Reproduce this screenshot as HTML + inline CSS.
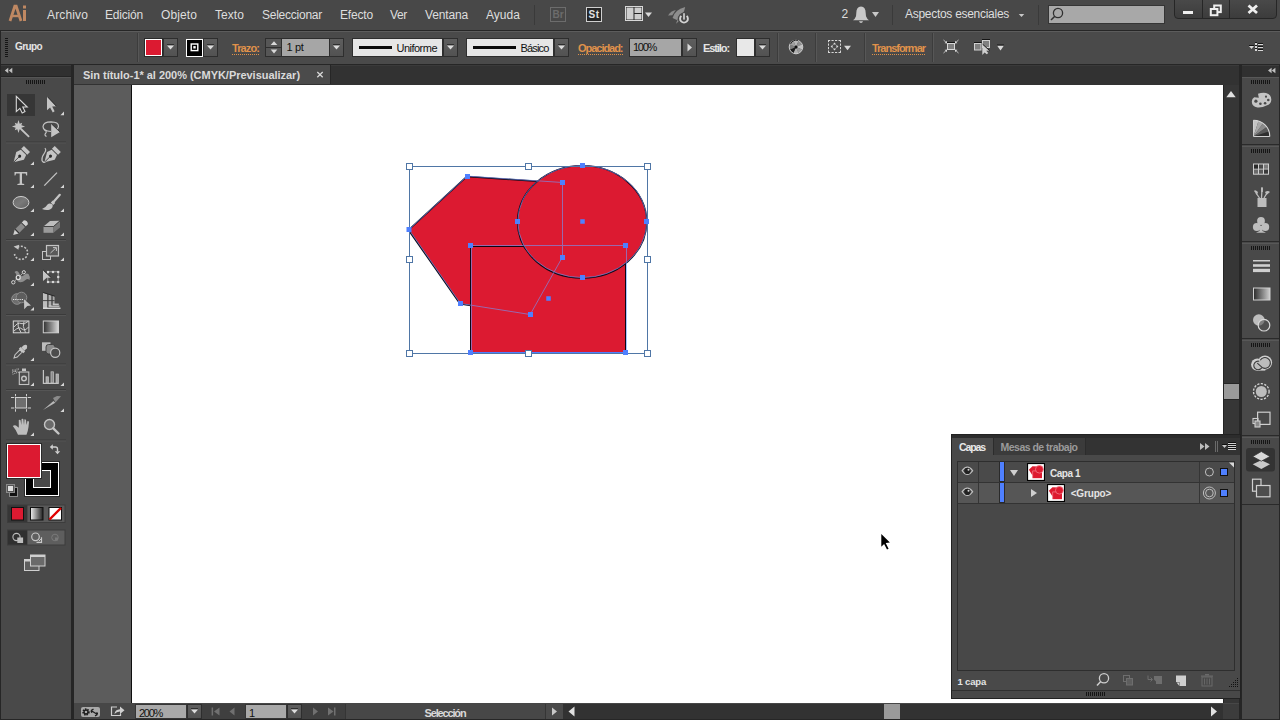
<!DOCTYPE html>
<html><head><meta charset="utf-8"><title>Illustrator</title>
<style>
html,body{margin:0;padding:0;}
body{width:1280px;height:720px;overflow:hidden;position:relative;background:#262626;font-family:"Liberation Sans",sans-serif;}
body>div,body>svg{position:absolute;}
.t{white-space:pre;}
</style></head><body>
<div style="left:0px;top:0px;width:1280px;height:30px;background:#484848;"></div>
<svg style="left:7px;top:3px;" width="22" height="21" viewBox="0 0 22 21"><g fill="none" stroke="#bf8862" stroke-width="2.8" stroke-linejoin="miter"><path d="M3 18 L7.8 3.2 L9.2 3.2 L14 18"/><path d="M5 13 L12 13" stroke-width="2.4"/></g><rect x="16" y="2.5" width="3" height="3" fill="#bf8862"/><rect x="16" y="7" width="3" height="11" fill="#bf8862"/></svg>
<div class="t" style="left:47px;top:9.34px;font-size:12px;line-height:12px;color:#dedede;font-weight:normal;letter-spacing:0.141px;">Archivo</div>
<div class="t" style="left:105px;top:9.34px;font-size:12px;line-height:12px;color:#dedede;font-weight:normal;letter-spacing:-0.194px;">Edición</div>
<div class="t" style="left:161px;top:9.34px;font-size:12px;line-height:12px;color:#dedede;font-weight:normal;letter-spacing:0.107px;">Objeto</div>
<div class="t" style="left:215px;top:9.34px;font-size:12px;line-height:12px;color:#dedede;font-weight:normal;letter-spacing:0.062px;">Texto</div>
<div class="t" style="left:262px;top:9.34px;font-size:12px;line-height:12px;color:#dedede;font-weight:normal;letter-spacing:-0.246px;">Seleccionar</div>
<div class="t" style="left:340px;top:9.34px;font-size:12px;line-height:12px;color:#dedede;font-weight:normal;letter-spacing:-0.172px;">Efecto</div>
<div class="t" style="left:390px;top:9.34px;font-size:12px;line-height:12px;color:#dedede;font-weight:normal;letter-spacing:-0.339px;">Ver</div>
<div class="t" style="left:425px;top:9.34px;font-size:12px;line-height:12px;color:#dedede;font-weight:normal;letter-spacing:-0.150px;">Ventana</div>
<div class="t" style="left:486px;top:9.34px;font-size:12px;line-height:12px;color:#dedede;font-weight:normal;letter-spacing:0.037px;">Ayuda</div>
<div style="left:534px;top:5px;width:1px;height:20px;background:#3a3a3a;"></div>
<div style="left:550px;top:7px;width:16px;height:15px;border:1px solid #6c6c6c;box-sizing:border-box;"></div>
<div class="t" style="left:552.5px;top:10.04px;font-size:10px;line-height:10px;color:#6c6c6c;font-weight:bold;letter-spacing:-0.062px;">Br</div>
<div style="left:586px;top:7px;width:16px;height:15px;border:1px solid #d0d0d0;background:#262626;box-sizing:border-box;"></div>
<div class="t" style="left:588.5px;top:10.04px;font-size:10px;line-height:10px;color:#e0e0e0;font-weight:bold;letter-spacing:0.500px;">St</div>
<svg style="left:624px;top:5px;" width="30" height="17" viewBox="0 0 30 17"><rect x="1.5" y="1.5" width="17" height="14" fill="#262626" stroke="#d8d8d8" stroke-width="1"/><rect x="2.5" y="2.5" width="7" height="12" fill="#cfcfcf"/><rect x="10.5" y="2.5" width="7" height="5.5" fill="#cfcfcf"/><rect x="10.5" y="9" width="7" height="5.5" fill="#cfcfcf"/><path d="M21.0 7.5 L28.0 7.5 L24.5 12.0 Z" fill="#d8d8d8"/></svg>
<svg style="left:666px;top:4px;" width="26" height="22" viewBox="0 0 26 22"><path d="M6.6 14 Q8.5 5.8 19.2 3 Q17.8 11.5 10.8 16 Z" fill="#8e8e8e"/><path d="M2 11.6 Q4.8 6.8 9.8 6 L6.3 11.3 Z" fill="#8a8a8a"/><path d="M10 19.8 L11.6 15.6 L13.4 16.8 Z" fill="#8a8a8a"/><circle cx="18" cy="14.8" r="6.2" fill="#484848"/><path d="M15.3 11.9 A3.9 3.9 0 1 0 20.7 11.9" fill="none" stroke="#d4d4d4" stroke-width="1.9"/><rect x="16.6" y="8.6" width="2.8" height="7.6" fill="#484848"/><rect x="17.2" y="9.2" width="1.6" height="6.4" fill="#d4d4d4"/></svg>
<div class="t" style="left:841.5px;top:8.14px;font-size:12px;line-height:12px;color:#dedede;font-weight:normal;letter-spacing:-0.188px;">2</div>
<svg style="left:852px;top:5px;" width="30" height="19" viewBox="0 0 30 19"><path d="M9 1.5 Q4.3 1.8 4.3 8 L4 11.2 Q3 13.8 1 15.3 L17 15.3 Q15 13.8 14 11.2 L13.7 8 Q13.7 1.8 9 1.5 Z" fill="#c8c8c8"/><path d="M7 16.3 L11 16.3 Q10.5 18 9 18 Q7.5 18 7 16.3 Z" fill="#c8c8c8"/><path d="M20.0 7 L27.0 7 L23.5 12 Z" fill="#c8c8c8"/></svg>
<div style="left:892px;top:5px;width:1px;height:20px;background:#3a3a3a;"></div>
<div class="t" style="left:905px;top:8.14px;font-size:12px;line-height:12px;color:#dedede;font-weight:normal;letter-spacing:-0.285px;">Aspectos esenciales</div>
<svg style="left:1017px;top:13px;" width="9" height="5" viewBox="0 0 9 5"><path d="M1.75 1 L7.25 1 L4.5 4 Z" fill="#c8c8c8"/></svg>
<div style="left:1038px;top:5px;width:1px;height:20px;background:#3a3a3a;"></div>
<div style="left:1048px;top:5px;width:117px;height:19px;background:#a8a8a8;border:1px solid #353535;box-sizing:border-box;"></div>
<svg style="left:1049px;top:6px;" width="16" height="17" viewBox="0 0 16 17"><circle cx="9" cy="7" r="4.6" fill="none" stroke="#303030" stroke-width="1.3"/><path d="M5.8 10.2 L2 14" stroke="#303030" stroke-width="1.5"/></svg>
<div style="left:1174px;top:-2px;width:103px;height:21px;background:linear-gradient(#4a4a4a,#3c3c3c);border:1px solid #262626;border-radius:0 0 4px 4px;box-sizing:border-box;"></div>
<div style="left:1202px;top:0px;width:1px;height:18px;background:#262626;"></div>
<div style="left:1229px;top:0px;width:1px;height:18px;background:#262626;"></div>
<div style="left:1183px;top:11px;width:10px;height:3px;background:#eeeeee;"></div>
<svg style="left:1208px;top:3px;" width="16" height="14" viewBox="0 0 16 14"><rect x="6.2" y="2.5" width="6.6" height="6.6" fill="none" stroke="#eeeeee" stroke-width="2"/><rect x="2.8" y="6" width="6.6" height="6.2" fill="#404040" stroke="#eeeeee" stroke-width="2"/></svg>
<svg style="left:1246px;top:3px;" width="14" height="12" viewBox="0 0 14 12"><path d="M2.5 2.5 L11 10 M11 2.5 L2.5 10" stroke="#eeeeee" stroke-width="2.8"/></svg>
<div style="left:0px;top:31px;width:1280px;height:33px;background:#4a4a4a;"></div>
<div style="left:1px;top:31px;width:1279px;height:1px;background:#5c5c5c;"></div>
<div style="left:0px;top:31px;width:1px;height:33px;background:#262626;"></div>
<svg style="left:5px;top:38px;" width="3" height="20" viewBox="0 0 3 20"><rect x="0" y="0" width="3" height="1" fill="#151515"/><rect x="0" y="2" width="3" height="1" fill="#151515"/><rect x="0" y="4" width="3" height="1" fill="#151515"/><rect x="0" y="6" width="3" height="1" fill="#151515"/><rect x="0" y="8" width="3" height="1" fill="#151515"/><rect x="0" y="10" width="3" height="1" fill="#151515"/><rect x="0" y="12" width="3" height="1" fill="#151515"/><rect x="0" y="14" width="3" height="1" fill="#151515"/><rect x="0" y="16" width="3" height="1" fill="#151515"/><rect x="0" y="18" width="3" height="1" fill="#151515"/></svg>
<div class="t" style="left:15px;top:41.73px;font-size:10px;line-height:10px;color:#e4e4e4;font-weight:bold;letter-spacing:-0.600px;">Grupo</div>
<div style="left:137px;top:33px;width:1px;height:29px;background:#3c3c3c;"></div>
<div style="left:138px;top:33px;width:1px;height:29px;background:#575757;"></div>
<div style="left:145px;top:39px;width:17px;height:17px;background:#dc1a31;border:1px solid #ffffff;outline:1px solid #2a2a2a;outline-offset:0;box-sizing:border-box;"></div>
<div style="left:163px;top:38px;width:15px;height:19px;background:linear-gradient(#5e5e5e,#525252);border:1px solid #2e2e2e;box-sizing:border-box;"></div>
<svg style="left:163px;top:38px;" width="15" height="19" viewBox="0 0 15 19"><rect x="4.0" y="6.0" width="7" height="1" fill="#2e2e2e"/><path d="M4.0 7.5 L11.0 7.5 L7.5 11.5 Z" fill="#dcdcdc"/></svg>
<div style="left:186px;top:38.5px;width:17px;height:18px;background:#000;border:1.5px solid #ffffff;box-sizing:border-box;"></div>
<svg style="left:186px;top:38px;" width="17" height="19" viewBox="0 0 17 19"><rect x="5.2" y="6" width="6.6" height="6.6" fill="none" stroke="#fff" stroke-width="1.4"/><rect x="7.3" y="8.1" width="2.4" height="2.4" fill="#fff"/></svg>
<div style="left:203px;top:38px;width:15px;height:19px;background:linear-gradient(#5e5e5e,#525252);border:1px solid #2e2e2e;box-sizing:border-box;"></div>
<svg style="left:203px;top:38px;" width="15" height="19" viewBox="0 0 15 19"><rect x="4.0" y="6.0" width="7" height="1" fill="#2e2e2e"/><path d="M4.0 7.5 L11.0 7.5 L7.5 11.5 Z" fill="#dcdcdc"/></svg>
<div class="t" style="left:232px;top:42.79px;font-size:11px;line-height:11px;color:#e0924a;font-weight:bold;letter-spacing:-0.901px;">Trazo:</div>
<div style="left:232px;top:54px;width:27px;height:1px;background:repeating-linear-gradient(90deg,#e0924a 0 1px,transparent 1px 2px);"></div>
<div style="left:265px;top:38px;width:17px;height:19px;background:#565656;border:1px solid #2e2e2e;box-sizing:border-box;"></div>
<div style="left:266px;top:47px;width:15px;height:1px;background:#2e2e2e;"></div>
<svg style="left:265px;top:38px;" width="17" height="19" viewBox="0 0 17 19"><path d="M5.7 7 L12.3 7 L9 3.2 Z" fill="#d8d8d8"/><path d="M5.7 11.5 L12.3 11.5 L9 15.5 Z" fill="#d8d8d8"/></svg>
<div style="left:282px;top:38px;width:47px;height:19px;background:#a6a6a6;border-top:1px solid #2e2e2e;border-bottom:1px solid #2e2e2e;box-sizing:border-box;"></div>
<div class="t" style="left:286.5px;top:41.89px;font-size:11px;line-height:11px;color:#111111;font-weight:normal;letter-spacing:-0.340px;">1 pt</div>
<div style="left:329px;top:38px;width:15px;height:19px;background:linear-gradient(#5e5e5e,#525252);border:1px solid #2e2e2e;box-sizing:border-box;"></div>
<svg style="left:329px;top:38px;" width="15" height="19" viewBox="0 0 15 19"><rect x="4.0" y="6.0" width="7" height="1" fill="#2e2e2e"/><path d="M4.0 7.5 L11.0 7.5 L7.5 11.5 Z" fill="#dcdcdc"/></svg>
<div style="left:352px;top:38px;width:91px;height:19px;background:#e6e6e6;border:1px solid #2e2e2e;box-sizing:border-box;"></div>
<div style="left:359px;top:46px;width:33px;height:3px;background:#0a0a0a;"></div>
<div class="t" style="left:396.5px;top:42.79px;font-size:11px;line-height:11px;color:#111111;font-weight:normal;letter-spacing:-0.516px;">Uniforme</div>
<div style="left:443px;top:38px;width:15px;height:19px;background:linear-gradient(#5e5e5e,#525252);border:1px solid #2e2e2e;box-sizing:border-box;"></div>
<svg style="left:443px;top:38px;" width="15" height="19" viewBox="0 0 15 19"><rect x="4.0" y="6.0" width="7" height="1" fill="#2e2e2e"/><path d="M4.0 7.5 L11.0 7.5 L7.5 11.5 Z" fill="#dcdcdc"/></svg>
<div style="left:466px;top:38px;width:88px;height:19px;background:#e6e6e6;border:1px solid #2e2e2e;box-sizing:border-box;"></div>
<div style="left:473px;top:46px;width:43px;height:3px;background:#0a0a0a;"></div>
<div class="t" style="left:520.5px;top:42.79px;font-size:11px;line-height:11px;color:#111111;font-weight:normal;letter-spacing:-0.839px;">Básico</div>
<div style="left:554px;top:38px;width:15px;height:19px;background:linear-gradient(#5e5e5e,#525252);border:1px solid #2e2e2e;box-sizing:border-box;"></div>
<svg style="left:554px;top:38px;" width="15" height="19" viewBox="0 0 15 19"><rect x="4.0" y="6.0" width="7" height="1" fill="#2e2e2e"/><path d="M4.0 7.5 L11.0 7.5 L7.5 11.5 Z" fill="#dcdcdc"/></svg>
<div class="t" style="left:578px;top:42.79px;font-size:11px;line-height:11px;color:#e0924a;font-weight:bold;letter-spacing:-1.033px;">Opacidad:</div>
<div style="left:578px;top:54px;width:45px;height:1px;background:repeating-linear-gradient(90deg,#e0924a 0 1px,transparent 1px 2px);"></div>
<div style="left:629px;top:38px;width:53px;height:19px;background:#a6a6a6;border:1px solid #2e2e2e;box-sizing:border-box;"></div>
<div class="t" style="left:633px;top:41.89px;font-size:11px;line-height:11px;color:#111111;font-weight:normal;letter-spacing:-1.285px;">100%</div>
<div style="left:682px;top:38px;width:15px;height:19px;background:linear-gradient(#5e5e5e,#525252);border:1px solid #2e2e2e;box-sizing:border-box;"></div>
<svg style="left:682px;top:38px;" width="15" height="19" viewBox="0 0 15 19"><path d="M5.5 5.5 L10 9.5 L5.5 13.5 Z" fill="#d8d8d8"/></svg>
<div class="t" style="left:703px;top:42.79px;font-size:11px;line-height:11px;color:#e4e4e4;font-weight:bold;letter-spacing:-1.089px;">Estilo:</div>
<div style="left:736px;top:38px;width:19px;height:19px;background:#e8e8e8;border:1px solid #2e2e2e;box-sizing:border-box;"></div>
<div style="left:755px;top:38px;width:15px;height:19px;background:linear-gradient(#5e5e5e,#525252);border:1px solid #2e2e2e;box-sizing:border-box;"></div>
<svg style="left:755px;top:38px;" width="15" height="19" viewBox="0 0 15 19"><rect x="4.0" y="6.0" width="7" height="1" fill="#2e2e2e"/><path d="M4.0 7.5 L11.0 7.5 L7.5 11.5 Z" fill="#dcdcdc"/></svg>
<div style="left:777px;top:33px;width:1px;height:29px;background:#3c3c3c;"></div>
<div style="left:778px;top:33px;width:1px;height:29px;background:#575757;"></div>
<svg style="left:788px;top:39px;" width="16" height="16" viewBox="0 0 16 16"><path d="M8 8 L5.47 1.90 A6.6 6.6 0 0 1 10.53 1.90 Z" fill="#b8b8b8"/><path d="M8 8 L10.53 1.90 A6.6 6.6 0 0 1 14.10 5.47 Z" fill="#8e8e8e"/><path d="M8 8 L14.10 5.47 A6.6 6.6 0 0 1 14.10 10.53 Z" fill="#c4c4c4"/><path d="M8 8 L14.10 10.53 A6.6 6.6 0 0 1 10.53 14.10 Z" fill="#9a9a9a"/><path d="M8 8 L10.53 14.10 A6.6 6.6 0 0 1 5.47 14.10 Z" fill="#b0b0b0"/><path d="M8 8 L5.47 14.10 A6.6 6.6 0 0 1 1.90 10.53 Z" fill="#1e1e1e"/><path d="M8 8 L1.90 10.53 A6.6 6.6 0 0 1 1.90 5.47 Z" fill="#7e7e7e"/><path d="M8 8 L1.90 5.47 A6.6 6.6 0 0 1 5.47 1.90 Z" fill="#a0a0a0"/><circle cx="8" cy="8" r="6.8" fill="none" stroke="#d8d8d8" stroke-width="0.9"/><path d="M2.5 5 A6.8 6.8 0 0 1 10 1.4" fill="none" stroke="#2a2a2a" stroke-width="1"/><circle cx="8" cy="8" r="1.5" fill="#111"/></svg>
<div style="left:815px;top:33px;width:1px;height:29px;background:#3c3c3c;"></div>
<div style="left:816px;top:33px;width:1px;height:29px;background:#575757;"></div>
<svg style="left:826px;top:38px;" width="28" height="17" viewBox="0 0 28 17"><rect x="2.0" y="2" width="2.2" height="1" fill="#d8d8d8"/><rect x="2.0" y="14" width="2.2" height="1" fill="#d8d8d8"/><rect x="2" y="2.0" width="1" height="2.2" fill="#d8d8d8"/><rect x="14" y="2.0" width="1" height="2.2" fill="#d8d8d8"/><rect x="5.5" y="2" width="2.2" height="1" fill="#d8d8d8"/><rect x="5.5" y="14" width="2.2" height="1" fill="#d8d8d8"/><rect x="2" y="5.5" width="1" height="2.2" fill="#d8d8d8"/><rect x="14" y="5.5" width="1" height="2.2" fill="#d8d8d8"/><rect x="9.0" y="2" width="2.2" height="1" fill="#d8d8d8"/><rect x="9.0" y="14" width="2.2" height="1" fill="#d8d8d8"/><rect x="2" y="9.0" width="1" height="2.2" fill="#d8d8d8"/><rect x="14" y="9.0" width="1" height="2.2" fill="#d8d8d8"/><rect x="12.5" y="2" width="2.2" height="1" fill="#d8d8d8"/><rect x="12.5" y="14" width="2.2" height="1" fill="#d8d8d8"/><rect x="2" y="12.5" width="1" height="2.2" fill="#d8d8d8"/><rect x="14" y="12.5" width="1" height="2.2" fill="#d8d8d8"/><path d="M8.5 4.6 L10.2 6.6 L6.8 6.6 Z M8.5 12.4 L10.2 10.4 L6.8 10.4 Z M4.6 8.5 L6.6 6.8 L6.6 10.2 Z M12.4 8.5 L10.4 6.8 L10.4 10.2 Z" fill="#d8d8d8"/><path d="M18.0 7.8 L25.0 7.8 L21.5 12.2 Z" fill="#d8d8d8"/></svg>
<div style="left:864px;top:33px;width:1px;height:29px;background:#3c3c3c;"></div>
<div style="left:865px;top:33px;width:1px;height:29px;background:#575757;"></div>
<div class="t" style="left:872px;top:42.79px;font-size:11px;line-height:11px;color:#e0924a;font-weight:bold;letter-spacing:-1.018px;">Transformar</div>
<div style="left:872px;top:54px;width:53px;height:1px;background:repeating-linear-gradient(90deg,#e0924a 0 1px,transparent 1px 2px);"></div>
<div style="left:932px;top:33px;width:1px;height:29px;background:#3c3c3c;"></div>
<div style="left:933px;top:33px;width:1px;height:29px;background:#575757;"></div>
<svg style="left:942px;top:38px;" width="18" height="17" viewBox="0 0 18 17"><rect x="5.5" y="5.5" width="7" height="6" fill="#808080" stroke="#d8d8d8" stroke-width="1"/><rect x="5" y="4" width="8" height="1" fill="#151515"/><path d="M1.5 2 L5 5.2 M16.5 2 L13 5.2 M1.5 15 L5 11.8 M16.5 15 L13 11.8" stroke="#cfcfcf" stroke-width="0.9"/><path d="M5 5.2 L2.6 5.2 L5 2.8 Z M13 5.2 L15.4 5.2 L13 2.8 Z M5 11.8 L2.6 11.8 L5 14.2 Z M13 11.8 L15.4 11.8 L13 14.2 Z" fill="#d8d8d8"/></svg>
<svg style="left:972px;top:38px;" width="36" height="18" viewBox="0 0 36 18"><rect x="2.5" y="5.5" width="6.5" height="6.5" fill="#808080" stroke="#d0d0d0" stroke-width="1"/><rect x="2" y="4" width="7.5" height="1" fill="#151515"/><rect x="10.5" y="2.5" width="7" height="7" fill="#808080" stroke="#d0d0d0" stroke-width="1"/><rect x="10" y="1" width="8" height="1" fill="#151515"/><path d="M10.3 6 L10.3 17 L12.6 14.4 L14.8 16.2 L16.2 15 L14.2 12.8 L17.6 12.6 Z" fill="#cfcfcf"/><path d="M10.6 6.2 L17.6 12.6" stroke="#151515" stroke-width="1"/><path d="M25.0 7.5 L32.0 7.5 L28.5 12.5 Z" fill="#d8d8d8"/><rect x="25" y="6.5" width="7" height="1" fill="#151515"/></svg>
<svg style="left:1244px;top:38px;" width="24" height="18" viewBox="0 0 24 18"><rect x="5" y="7" width="5" height="1" fill="#151515"/><path d="M5 8 L10 8 L7.5 11 Z" fill="#d8d8d8"/><rect x="11" y="5" width="2" height="2" fill="#d8d8d8"/><rect x="11" y="4" width="2" height="1" fill="#1a1a1a"/><rect x="14" y="5" width="5" height="1" fill="#151515"/><rect x="14" y="6" width="5" height="1" fill="#d8d8d8"/><rect x="11" y="8" width="2" height="2" fill="#d8d8d8"/><rect x="11" y="7" width="2" height="1" fill="#1a1a1a"/><rect x="14" y="8" width="5" height="1" fill="#151515"/><rect x="14" y="9" width="5" height="1" fill="#d8d8d8"/><rect x="11" y="11" width="2" height="2" fill="#d8d8d8"/><rect x="11" y="10" width="2" height="1" fill="#1a1a1a"/><rect x="14" y="11" width="5" height="1" fill="#151515"/><rect x="14" y="12" width="5" height="1" fill="#d8d8d8"/></svg>
<div style="left:1px;top:65px;width:70px;height:12px;background:#303030;"></div>
<div style="left:1px;top:65px;width:70px;height:1px;background:#3c3c3c;"></div>
<div style="left:1px;top:76px;width:70px;height:1px;background:#242424;"></div>
<svg style="left:4px;top:67px;" width="10" height="8" viewBox="0 0 10 8"><path d="M4.3 0.8 L0.8 3.5 L4.3 6.2 Z M8.3 0.8 L4.8 3.5 L8.3 6.2 Z" fill="#c0c0c0"/></svg>
<div style="left:1px;top:77px;width:70px;height:642px;background:#494949;"></div>
<div style="left:1px;top:77px;width:70px;height:1px;background:#555555;"></div>
<svg style="left:26px;top:80px;" width="21" height="5" viewBox="0 0 21 5"><rect x="0" y="0" width="1" height="4" fill="#151515"/><rect x="2" y="0" width="1" height="4" fill="#151515"/><rect x="4" y="0" width="1" height="4" fill="#151515"/><rect x="6" y="0" width="1" height="4" fill="#151515"/><rect x="8" y="0" width="1" height="4" fill="#151515"/><rect x="10" y="0" width="1" height="4" fill="#151515"/><rect x="12" y="0" width="1" height="4" fill="#151515"/><rect x="14" y="0" width="1" height="4" fill="#151515"/><rect x="16" y="0" width="1" height="4" fill="#151515"/><rect x="18" y="0" width="1" height="4" fill="#151515"/></svg>
<div style="left:74px;top:65px;width:1165px;height:20px;background:#323232;"></div>
<div style="left:74px;top:65px;width:1165px;height:1px;background:#3a3a3a;"></div>
<div style="left:74px;top:65px;width:256px;height:19px;background:#4b4b4b;"></div>
<div style="left:330px;top:65px;width:1px;height:19px;background:#262626;"></div>
<div class="t" style="left:83px;top:69.69px;font-size:11px;line-height:11px;color:#dadada;font-weight:bold;letter-spacing:-0.029px;">Sin título-1* al 200% (CMYK/Previsualizar)</div>
<svg style="left:315px;top:69px;" width="10" height="10" viewBox="0 0 10 10"><path d="M2.3 3 L7.7 8.2 M7.7 3 L2.3 8.2" stroke="#d8d8d8" stroke-width="1.3"/></svg>
<div style="left:74px;top:85px;width:58px;height:618px;background:#5c5c5c;"></div>
<div style="left:132px;top:85px;width:1091px;height:618px;background:#ffffff;"></div>
<div style="left:131px;top:85px;width:1px;height:618px;background:#0e0e0e;"></div>
<div style="left:1223px;top:85px;width:16px;height:619px;background:#3a3a3a;"></div>
<div style="left:1242px;top:65px;width:37px;height:12px;background:#303030;"></div>
<div style="left:1242px;top:65px;width:37px;height:1px;background:#3c3c3c;"></div>
<div style="left:1242px;top:77px;width:37px;height:642px;background:#494949;"></div>
<div style="left:951px;top:434px;width:290px;height:264px;background:#494949;border:1px solid #262626;box-sizing:border-box;"></div>
<svg style="left:0px;top:0px;" width="72" height="720" viewBox="0 0 72 720"><rect x="6" y="141.5" width="60" height="1" fill="#3b3b3b"/><rect x="6" y="142.5" width="60" height="1" fill="#555555"/><rect x="6" y="239.0" width="60" height="1" fill="#3b3b3b"/><rect x="6" y="240.0" width="60" height="1" fill="#555555"/><rect x="6" y="314.0" width="60" height="1" fill="#3b3b3b"/><rect x="6" y="315.0" width="60" height="1" fill="#555555"/><rect x="6" y="363.5" width="60" height="1" fill="#3b3b3b"/><rect x="6" y="364.5" width="60" height="1" fill="#555555"/><rect x="6" y="389.0" width="60" height="1" fill="#3b3b3b"/><rect x="6" y="390.0" width="60" height="1" fill="#555555"/><rect x="6" y="439.5" width="60" height="1" fill="#3b3b3b"/><rect x="6" y="440.5" width="60" height="1" fill="#555555"/><rect x="7" y="94" width="28" height="22" fill="#363636"/><path d="M16.3 96.3 L16.3 111.6 L19.9 108.3 L22.2 113 L25 111.6 L22.8 107 L27.2 107 Z" fill="#303030" stroke="#d8d8d8" stroke-width="1.1" stroke-linejoin="miter"/><path d="M47 96.6 L47 110.2 L50.1 107.6 L52.8 112.4 L54.6 111.3 L52.2 106.4 L56.2 106.2 Z" fill="#c4c4c4"/><path d="M47.5 96.8 L56.2 106" stroke="#262626" stroke-width="0.9"/><path d="M60.4 115.2 L64 115.2 L64 111.60000000000001 Z" fill="#d6d6d6"/><path d="M25.10 126.50 L21.36 127.69 L22.18 130.18 L19.69 129.36 L18.50 133.10 L17.31 129.36 L14.82 130.18 L15.64 127.69 L11.90 126.50 L15.64 125.31 L14.82 122.82 L17.31 123.64 L18.50 119.90 L19.69 123.64 L22.18 122.82 L21.36 125.31 Z" fill="#c4c4c4"/><path d="M21.5 129.5 L28.6 136.4" stroke="#c4c4c4" stroke-width="1.8" stroke-linecap="round"/><path d="M51 131.5 Q43 131 43 126.5 Q43.5 121.8 51 121.8 Q58.8 122 58.5 126.5 Q58.2 129 56 130" fill="none" stroke="#c4c4c4" stroke-width="1.2"/><path d="M44.5 130 Q47.5 131.5 45.5 133.5 Q44 135 46.5 136.5" fill="none" stroke="#c4c4c4" stroke-width="1.1"/><path d="M51.2 123.8 L60 132 L51.2 137.3 Z" fill="#c4c4c4"/><path d="M51.6 124 L60 132" stroke="#262626" stroke-width="0.8"/><g transform="translate(13.6,162.3) rotate(45) scale(1.08)"><path d="M0 0 L-5 -8.5 L-3.5 -13 L3.5 -13 L5 -8.5 Z" fill="#c4c4c4"/><path d="M0 0 L0 -7" stroke="#3a3a3a" stroke-width="0.8"/><circle cx="0" cy="-8" r="1.4" fill="#2a2a2a"/><rect x="-4" y="-17.5" width="8" height="3.6" fill="#c4c4c4"/></g><path d="M30.4 165 L34 165 L34 161.4 Z" fill="#d6d6d6"/><g transform="translate(44.4,162.3) rotate(45) scale(1.08)"><path d="M0 0 L-5 -8.5 L-3.5 -13 L3.5 -13 L5 -8.5 Z" fill="#c4c4c4"/><path d="M0 0 L0 -7" stroke="#3a3a3a" stroke-width="0.8"/><circle cx="0" cy="-8" r="1.4" fill="#2a2a2a"/><rect x="-4" y="-17.5" width="8" height="3.6" fill="#c4c4c4"/></g><path d="M44.8 148.3 Q46.8 149.5 44.5 153 Q41.5 157 42 160.5 Q43 163 45.5 162" fill="none" stroke="#c4c4c4" stroke-width="1.2"/><path d="M14.5 172 L27.2 172 L27.2 175.5 L26.3 175.5 L25.6 173.6 L22 173.6 L22 183.6 L24.2 184 L24.2 185 L17.4 185 L17.4 184 L19.7 183.6 L19.7 173.6 L16.1 173.6 L15.4 175.5 L14.5 175.5 Z" fill="#c4c4c4"/><path d="M30.4 188 L34 188 L34 184.4 Z" fill="#d6d6d6"/><path d="M44.3 185.6 L57 172.6" stroke="#c4c4c4" stroke-width="1.3"/><path d="M60.4 188 L64 188 L64 184.4 Z" fill="#d6d6d6"/><defs><linearGradient id="eg" x1="0" y1="0" x2="1" y2="1"><stop offset="0" stop-color="#6a6a6a"/><stop offset="0.5" stop-color="#7a7a7a"/><stop offset="1" stop-color="#5e5e5e"/></linearGradient><linearGradient id="gg" x1="0" y1="0" x2="1" y2="0"><stop offset="0" stop-color="#303030"/><stop offset="1" stop-color="#d8d8d8"/></linearGradient><linearGradient id="gg2" x1="0" y1="0" x2="1" y2="0"><stop offset="0" stop-color="#f0f0f0"/><stop offset="1" stop-color="#202020"/></linearGradient></defs><ellipse cx="21" cy="202.5" rx="7.9" ry="6" fill="url(#eg)" stroke="#d0d0d0" stroke-width="1"/><path d="M30.4 212 L34 212 L34 208.4 Z" fill="#d6d6d6"/><path d="M59.8 194.8 L53 202.5" stroke="#c4c4c4" stroke-width="2.2" stroke-linecap="round"/><path d="M52.8 200.6 L55.2 203 L53.2 205 L50.8 202.6 Z" fill="#c4c4c4"/><path d="M42 209 Q45.5 208 47.5 204.5 Q49.5 202.3 52.5 204.5 Q53.5 207.5 50 209.5 Q46 210.8 42 209 Z" fill="#c4c4c4"/><path d="M60.4 212 L64 212 L64 208.4 Z" fill="#d6d6d6"/><g transform="translate(13.2,235) rotate(45)"><path d="M0 0 L-2.8 -5 L2.8 -5 Z" fill="#d0d0d0"/><rect x="-2.8" y="-15" width="5.6" height="10" fill="#8a8a8a"/><rect x="-2.8" y="-15" width="5.6" height="1" fill="#2e2e2e"/><rect x="-2.8" y="-6" width="5.6" height="1" fill="#2e2e2e"/><path d="M-2.8 -15 L-2.8 -18 Q0 -20.5 2.8 -18 L2.8 -15 Z" fill="#d0d0d0"/></g><path d="M30.4 236 L34 236 L34 232.4 Z" fill="#d6d6d6"/><path d="M43.5 226.5 L50 221 L60 220.8 L53.5 226.5 Z" fill="#bdbdbd"/><path d="M43.5 226.5 L53.5 226.5 L53.5 232.8 L43.5 232.8 Z" fill="#9a9a9a"/><path d="M53.5 226.5 L60 220.8 L60 227.5 L53.5 232.8 Z" fill="#777"/><path d="M43.5 226.5 L53.5 226.5 L60 220.8" fill="none" stroke="#303030" stroke-width="0.8"/><path d="M60.4 236 L64 236 L64 232.4 Z" fill="#d6d6d6"/><path d="M17.5 247.2 A6.6 6.6 0 1 1 14.5 254" fill="none" stroke="#c4c4c4" stroke-width="1.6" stroke-dasharray="2 1.5"/><path d="M13.6 246.6 L19.2 244.8 L18.4 249.8 Z" fill="#c4c4c4"/><path d="M30.4 261 L34 261 L34 257.4 Z" fill="#d6d6d6"/><rect x="42.5" y="251.5" width="8" height="8" fill="none" stroke="#c4c4c4" stroke-width="1"/><rect x="46.5" y="245.5" width="12" height="10.5" fill="#5a5a5a" stroke="#c4c4c4" stroke-width="1.2"/><path d="M50.5 253 L55.8 248" stroke="#c4c4c4" stroke-width="1"/><path d="M53 247.6 L56.4 247.6 L56.4 251" fill="none" stroke="#c4c4c4" stroke-width="1"/><path d="M60.4 261 L64 261 L64 257.4 Z" fill="#d6d6d6"/><path d="M14.5 272 Q17.5 269.5 19 273 Q21 278 23.5 275.5 Q26 272.5 28.5 274 Q30.5 276.5 29.5 280 Q27.5 278 25.5 280 Q21 284 17.5 281 Q15.5 278 16.5 275.5 Q16 273 14.5 272 Z" fill="#8e8e8e"/><path d="M13.3 282.3 L24 272" stroke="#e0e0e0" stroke-width="0.9" stroke-dasharray="1.2 1"/><circle cx="13.3" cy="282.3" r="1.7" fill="#4d4d4d" stroke="#e0e0e0" stroke-width="0.9"/><circle cx="18.2" cy="277.5" r="2" fill="#4d4d4d" stroke="#e0e0e0" stroke-width="1.2"/><circle cx="23.8" cy="272.2" r="1.6" fill="#4d4d4d" stroke="#e0e0e0" stroke-width="0.9"/><path d="M30.4 286 L34 286 L34 282.4 Z" fill="#d6d6d6"/><rect x="47.8" y="271.8" width="10.4" height="10.2" fill="none" stroke="#a8a8a8" stroke-width="0.9"/><rect x="46.9" y="270.9" width="2.2" height="2.2" fill="#d8d8d8"/><rect x="51.9" y="270.9" width="2.2" height="2.2" fill="#d8d8d8"/><rect x="57.1" y="270.9" width="2.2" height="2.2" fill="#d8d8d8"/><rect x="57.1" y="275.9" width="2.2" height="2.2" fill="#d8d8d8"/><rect x="46.9" y="280.9" width="2.2" height="2.2" fill="#d8d8d8"/><rect x="51.9" y="280.9" width="2.2" height="2.2" fill="#d8d8d8"/><rect x="57.1" y="280.9" width="2.2" height="2.2" fill="#d8d8d8"/><path d="M43 270 L51.2 277.8 L46.8 277.8 L43 281 Z" fill="#c4c4c4"/><path d="M43.2 270 L51.2 277.6" stroke="#1e1e1e" stroke-width="0.9"/><circle cx="17" cy="299" r="5.3" fill="#6e6e6e" stroke="#8c8c8c" stroke-width="1"/><circle cx="21.5" cy="297.5" r="5.3" fill="#5e5e5e" stroke="#8c8c8c" stroke-width="1"/><path d="M13 299.5 L24 299.5" stroke="#e8e8e8" stroke-width="1.2" stroke-dasharray="1.2 1"/><path d="M24 299.2 L31 305.5 L27.3 306 L24.2 309.2 Z" fill="#c4c4c4"/><path d="M30.4 310.5 L34 310.5 L34 306.9 Z" fill="#d6d6d6"/><path d="M43 292.8 L47.5 294.2 L47.5 308 L43 308 Z" fill="#bdbdbd"/><path d="M48.3 294.5 L51.6 295.5 L51.6 306.2 L48.3 306.2 Z" fill="#b0b0b0"/><path d="M52.4 295.8 L54.6 296.5 L54.6 304.2 L52.4 304.2 Z" fill="#a8a8a8"/><rect x="52.4" y="303.6" width="6.4" height="1.3" fill="#cfcfcf"/><rect x="48.3" y="305.5" width="11.2" height="1.3" fill="#cfcfcf"/><rect x="43" y="307.5" width="17.5" height="1.5" fill="#d8d8d8"/><path d="M47.9 294 L47.9 307.4 M52 295.4 L52 305.4" stroke="#333" stroke-width="0.8"/><path d="M43 300.6 L54.6 300.6" stroke="#3a3a3a" stroke-width="0.9"/><path d="M42.8 292.4 L54.8 296.2" stroke="#262626" stroke-width="0.9"/><rect x="13.3" y="321" width="15.6" height="11.8" fill="#4d4d4d" stroke="#d8d8d8" stroke-width="1"/><path d="M14 327 Q18 322 21 323.5 Q24 325 28 321.5 M14 331 Q19 326 22 329 Q25 331.5 28.5 327 M18 321.5 Q17 327 21 332.5 M24 321.5 Q22 326 25.5 332.5" fill="none" stroke="#d8d8d8" stroke-width="0.9"/><rect x="43.3" y="321" width="15.2" height="11.8" fill="url(#gg)" stroke="#d0d0d0" stroke-width="1"/><g transform="translate(14,358) rotate(45)"><path d="M0 0 L-1.6 -3 L-1.6 -10 L1.6 -10 L1.6 -3 Z" fill="#4d4d4d" stroke="#c4c4c4" stroke-width="1"/><rect x="-3.2" y="-12.5" width="6.4" height="2.5" fill="#c4c4c4"/><path d="M-2.2 -12.5 L-2.2 -16 Q0 -20 2.2 -16 L2.2 -12.5 Z" fill="#c4c4c4"/></g><path d="M30.4 361 L34 361 L34 357.4 Z" fill="#d6d6d6"/><rect x="42" y="342.3" width="8.5" height="8.5" fill="#bdbdbd"/><rect x="46" y="344.5" width="9" height="9.5" rx="2.5" fill="#8a8a8a" stroke="#3a3a3a" stroke-width="0.9"/><circle cx="55.2" cy="352.8" r="4.6" fill="#4d4d4d" stroke="#c4c4c4" stroke-width="1.2"/><circle cx="12.5" cy="370" r="0.55" fill="#d0d0d0"/><circle cx="14" cy="370" r="0.55" fill="#d0d0d0"/><circle cx="15.5" cy="370" r="0.55" fill="#d0d0d0"/><circle cx="17" cy="369" r="0.55" fill="#d0d0d0"/><circle cx="18.5" cy="369" r="0.55" fill="#d0d0d0"/><circle cx="12.5" cy="372" r="0.55" fill="#d0d0d0"/><circle cx="14" cy="371.5" r="0.55" fill="#d0d0d0"/><circle cx="15.5" cy="371.3" r="0.55" fill="#d0d0d0"/><circle cx="17" cy="371" r="0.55" fill="#d0d0d0"/><circle cx="13" cy="374" r="0.55" fill="#d0d0d0"/><circle cx="14.8" cy="373.3" r="0.55" fill="#d0d0d0"/><circle cx="16.5" cy="372.8" r="0.55" fill="#d0d0d0"/><circle cx="18.3" cy="372.3" r="0.55" fill="#d0d0d0"/><rect x="22" y="368.5" width="4" height="2.5" fill="#c4c4c4"/><rect x="19.3" y="372" width="9.5" height="12.5" fill="#4d4d4d" stroke="#c4c4c4" stroke-width="1.1"/><circle cx="24" cy="378.5" r="2.3" fill="none" stroke="#c4c4c4" stroke-width="1.4"/><path d="M30.4 386 L34 386 L34 382.4 Z" fill="#d6d6d6"/><path d="M43.4 370 L43.4 383.4 L58.8 383.4" fill="none" stroke="#c4c4c4" stroke-width="1.2"/><rect x="46" y="376.8" width="2.6" height="6" fill="#a8a8a8" stroke="#c4c4c4" stroke-width="0.7"/><rect x="51" y="371.8" width="2.6" height="11" fill="#8a8a8a" stroke="#c4c4c4" stroke-width="0.7"/><rect x="56" y="374" width="2.6" height="8.8" fill="#a8a8a8" stroke="#c4c4c4" stroke-width="0.7"/><path d="M60.4 386 L64 386 L64 382.4 Z" fill="#d6d6d6"/><rect x="15.5" y="397.5" width="11" height="10.5" fill="#6e6e6e" stroke="#d0d0d0" stroke-width="1"/><path d="M15.5 394 V396.3 M26.5 394 V396.3 M15.5 409.2 V411.7 M26.5 409.2 V411.7 M11 397.5 H14.3 M27.7 397.5 H31 M11 408 H14.3 M27.7 408 H31" stroke="#d0d0d0" stroke-width="1"/><path d="M43 410 L53.5 401 L55.3 402.8 Z" fill="#b8b8b8"/><path d="M53 398 L57 396 L61 396.3 L55.5 402.5 Z" fill="#8a8a8a"/><path d="M60.4 412 L64 412 L64 408.4 Z" fill="#d6d6d6"/><path d="M18 434.8 L26.5 434.8 Q28 431 28.5 427 L29 422 Q28.8 420.8 27.5 421 L26.5 425 L26 420 Q25.5 419 24.5 419.3 L24 425 L23.3 419 Q22.5 418.3 21.6 419 L21.3 425 L20.6 420.2 Q19.8 419.4 18.8 420 L18.8 427.8 L16 425.5 Q14.3 424.8 12.8 426 Q15.5 429 18 434.8 Z" fill="#bdbdbd"/><path d="M30.4 436 L34 436 L34 432.4 Z" fill="#d6d6d6"/><circle cx="49.5" cy="424.5" r="5" fill="#6a6a6a" stroke="#c4c4c4" stroke-width="1.4"/><path d="M53.3 428.3 L58.5 433.5" stroke="#c4c4c4" stroke-width="2.4" stroke-linecap="round"/></svg>
<svg style="left:0px;top:0px;" width="72" height="720" viewBox="0 0 72 720"><rect x="6" y="443" width="36" height="36" fill="#2a2a2a"/><rect x="24" y="461" width="36" height="36" fill="#2a2a2a"/><rect x="25" y="462" width="34" height="34" fill="#ffffff"/><rect x="26" y="463" width="32" height="32" fill="#000"/><rect x="33" y="470" width="18" height="18" fill="#ffffff"/><rect x="34" y="471" width="16" height="16" fill="#494949"/><rect x="6" y="443" width="36" height="36" fill="#2a2a2a"/><rect x="7" y="444" width="34" height="34" fill="#ffffff"/><rect x="8" y="445" width="32" height="32" fill="#dc1a31"/><path d="M52 447 L55.5 447 Q57.5 447 57.5 449 L57.5 451.5" fill="none" stroke="#cfcfcf" stroke-width="1.4"/><path d="M49.8 447 L52.8 444.3 L52.8 449.7 Z M57.5 454.2 L54.8 451.2 L60.2 451.2 Z" fill="#cfcfcf"/><rect x="9.5" y="487.5" width="8" height="9" fill="#111" stroke="#8a8a8a" stroke-width="1"/><rect x="6.5" y="484.5" width="8" height="8" fill="#555" stroke="#8a8a8a" stroke-width="1"/><rect x="8" y="486" width="5" height="5" fill="#e0e0e0"/><rect x="7" y="504.5" width="58.5" height="18.5" fill="#3c3c3c"/><rect x="8" y="505.5" width="19" height="16.5" fill="#363636"/><rect x="27.5" y="505.5" width="37" height="16.5" fill="#5a5a5a"/><rect x="11.5" y="507.5" width="12" height="12.5" fill="#dc1a31" stroke="#111" stroke-width="1"/><rect x="30.5" y="507.5" width="12.5" height="12.5" fill="url(#gg2)" stroke="#111" stroke-width="1"/><rect x="49" y="507.5" width="12.5" height="12.5" fill="#fff" stroke="#111" stroke-width="1"/><path d="M49.5 519.5 L61 508" stroke="#e00000" stroke-width="2.4"/><rect x="7" y="529.5" width="58.5" height="16" fill="#3c3c3c"/><rect x="8" y="530.5" width="19" height="14" fill="#303030"/><rect x="27.5" y="530.5" width="37" height="14" fill="#5e5e5e"/><circle cx="16.5" cy="537" r="3.6" fill="none" stroke="#bdbdbd" stroke-width="1.1"/><rect x="17.3" y="537.5" width="5.8" height="5.5" fill="#bdbdbd"/><circle cx="35.5" cy="536.8" r="3.8" fill="none" stroke="#c8c8c8" stroke-width="1.2"/><path d="M36.5 542.3 L41.5 542.3 L41.5 537.3" fill="none" stroke="#c8c8c8" stroke-width="1.2"/><path d="M38.8 541.2 L41 539" stroke="#c8c8c8" stroke-width="1"/><circle cx="55" cy="537.5" r="3.3" fill="none" stroke="#7a7a7a" stroke-width="1"/><rect x="55" y="537.5" width="3" height="3" fill="#7a7a7a"/><rect x="24.5" y="559.5" width="14.5" height="11" fill="#5e5e5e" stroke="#cfcfcf" stroke-width="1"/><rect x="24.5" y="559.5" width="14.5" height="2" fill="#cfcfcf"/><rect x="30.5" y="555" width="14.5" height="11" fill="#6a6a6a" stroke="#cfcfcf" stroke-width="1"/><rect x="30.5" y="555" width="14.5" height="2" fill="#cfcfcf"/></svg>
<div style="left:74px;top:703px;width:1165px;height:16px;background:#474747;"></div>
<div style="left:81px;top:707px;width:19px;height:10px;background:#a9a9a9;border-radius:2px;"></div>
<svg style="left:81px;top:707px;" width="19" height="10" viewBox="0 0 19 10"><circle cx="5" cy="5" r="2.6" fill="none" stroke="#1e1e1e" stroke-width="2.2" stroke-dasharray="1.3 0.9"/><circle cx="5" cy="5" r="2" fill="none" stroke="#1e1e1e" stroke-width="1.3"/><path d="M10 3.5 L16.5 7.5 M10 3.5 L12.5 2.2 M10 3.5 L10.8 5.8 M16.5 7.5 L14 8.8 M16.5 7.5 L15.7 5.2" stroke="#1e1e1e" stroke-width="1.3"/></svg>
<svg style="left:110px;top:705px;" width="16" height="12" viewBox="0 0 16 12"><path d="M7 2 L1.5 2 L1.5 10.5 L10.5 10.5 L10.5 8.5" fill="none" stroke="#cfcfcf" stroke-width="1.2"/><path d="M4.5 9 Q5 4.5 10 4.2 L10 1.5 L14.5 5.2 L10 9 L10 6.5 Q6.5 6.5 4.5 9 Z" fill="#cfcfcf"/></svg>
<div style="left:135px;top:704px;width:52px;height:15px;background:#a9a9a9;border:1px solid #353535;box-sizing:border-box;"></div>
<div class="t" style="left:139px;top:707.69px;font-size:11px;line-height:11px;color:#111111;font-weight:normal;letter-spacing:-1.285px;">200%</div>
<div style="left:187px;top:704px;width:15px;height:15px;background:linear-gradient(#5e5e5e,#525252);border:1px solid #2e2e2e;box-sizing:border-box;"></div>
<svg style="left:187px;top:704px;" width="15" height="15" viewBox="0 0 15 15"><rect x="4.0" y="4.0" width="7" height="1" fill="#2e2e2e"/><path d="M4.0 5.5 L11.0 5.5 L7.5 9.5 Z" fill="#dcdcdc"/></svg>
<div style="left:202px;top:704px;width:43px;height:15px;background:#3f3f3f;"></div>
<svg style="left:202px;top:704px;" width="43" height="15" viewBox="0 0 43 15"><rect x="9.6" y="3.5" width="1.5" height="8" fill="#707070"/><path d="M17.5 3.5 L12 7.5 L17.5 11.5 Z" fill="#707070"/><path d="M32.5 3.5 L27.5 7.5 L32.5 11.5 Z" fill="#707070"/></svg>
<div style="left:245px;top:704px;width:42px;height:15px;background:#a9a9a9;border:1px solid #353535;box-sizing:border-box;"></div>
<div class="t" style="left:249px;top:707.69px;font-size:11px;line-height:11px;color:#111111;font-weight:normal;letter-spacing:-0.125px;">1</div>
<div style="left:287px;top:704px;width:15px;height:15px;background:linear-gradient(#5e5e5e,#525252);border:1px solid #2e2e2e;box-sizing:border-box;"></div>
<svg style="left:287px;top:704px;" width="15" height="15" viewBox="0 0 15 15"><rect x="4.0" y="4.0" width="7" height="1" fill="#2e2e2e"/><path d="M4.0 5.5 L11.0 5.5 L7.5 9.5 Z" fill="#dcdcdc"/></svg>
<div style="left:302px;top:704px;width:43px;height:15px;background:#3f3f3f;"></div>
<svg style="left:302px;top:704px;" width="43" height="15" viewBox="0 0 43 15"><path d="M11 3.5 L16 7.5 L11 11.5 Z" fill="#707070"/><path d="M26 3.5 L31.5 7.5 L26 11.5 Z" fill="#707070"/><rect x="32" y="3.5" width="1.5" height="8" fill="#707070"/></svg>
<div style="left:345px;top:704px;width:1px;height:15px;background:#353535;"></div>
<div class="t" style="left:424.5px;top:708.09px;font-size:11px;line-height:11px;color:#d8d8d8;font-weight:bold;letter-spacing:-1.151px;">Selección</div>
<div style="left:545px;top:704px;width:1px;height:15px;background:#353535;"></div>
<div style="left:546px;top:704px;width:17px;height:15px;background:#4a4a4a;"></div>
<svg style="left:546px;top:704px;" width="17" height="15" viewBox="0 0 17 15"><path d="M6 3.5 L11 7.5 L6 11.5 Z" fill="#c8c8c8"/></svg>
<div style="left:563px;top:704px;width:660px;height:15px;background:#323232;"></div>
<svg style="left:563px;top:704px;" width="17" height="15" viewBox="0 0 17 15"><path d="M11.5 2.5 L5.5 7.5 L11.5 12.5 Z" fill="#e0e0e0"/></svg>
<div style="left:884px;top:704px;width:16px;height:15px;background:#9a9a9a;"></div>
<svg style="left:1206px;top:704px;" width="17" height="15" viewBox="0 0 17 15"><path d="M5 2.5 L11 7.5 L5 12.5 Z" fill="#e0e0e0"/></svg>
<div style="left:1223px;top:704px;width:16px;height:15px;background:#3c3c3c;"></div>
<div style="left:1223px;top:85px;width:16px;height:618px;background:#363636;"></div>
<div style="left:1223px;top:85px;width:1px;height:618px;background:#242424;"></div>
<svg style="left:1223px;top:85px;" width="16" height="15" viewBox="0 0 16 15"><path d="M3.3 12.2 L8 6 L12.7 12.2 Z" fill="#e0e0e0"/></svg>
<div style="left:1224px;top:383px;width:15px;height:17px;background:#262626;"></div>
<div style="left:1224px;top:384px;width:15px;height:15px;background:#9a9a9a;"></div>
<div style="left:1242px;top:505px;width:37px;height:214px;background:#494949;"></div>
<svg style="left:0px;top:0px;pointer-events:none;" width="1280" height="720" viewBox="0 0 1280 720"><path d="M1271.6 67.8 L1268 70.5 L1271.6 73.2 Z M1275.4 67.8 L1271.8 70.5 L1275.4 73.2 Z" fill="#c0c0c0"/><rect x="1242" y="77" width="37" height="68" fill="#494949"/><rect x="1242" y="144" width="37" height="1" fill="#2a2a2a"/><rect x="1242" y="77" width="37" height="1" fill="#585858"/><rect x="1251" y="80" width="1" height="4" fill="#151515"/><rect x="1253" y="80" width="1" height="4" fill="#151515"/><rect x="1255" y="80" width="1" height="4" fill="#151515"/><rect x="1257" y="80" width="1" height="4" fill="#151515"/><rect x="1259" y="80" width="1" height="4" fill="#151515"/><rect x="1261" y="80" width="1" height="4" fill="#151515"/><rect x="1263" y="80" width="1" height="4" fill="#151515"/><rect x="1265" y="80" width="1" height="4" fill="#151515"/><rect x="1267" y="80" width="1" height="4" fill="#151515"/><rect x="1269" y="80" width="1" height="4" fill="#151515"/><rect x="1242" y="146" width="37" height="96" fill="#494949"/><rect x="1242" y="241" width="37" height="1" fill="#2a2a2a"/><rect x="1242" y="146" width="37" height="1" fill="#585858"/><rect x="1251" y="149" width="1" height="4" fill="#151515"/><rect x="1253" y="149" width="1" height="4" fill="#151515"/><rect x="1255" y="149" width="1" height="4" fill="#151515"/><rect x="1257" y="149" width="1" height="4" fill="#151515"/><rect x="1259" y="149" width="1" height="4" fill="#151515"/><rect x="1261" y="149" width="1" height="4" fill="#151515"/><rect x="1263" y="149" width="1" height="4" fill="#151515"/><rect x="1265" y="149" width="1" height="4" fill="#151515"/><rect x="1267" y="149" width="1" height="4" fill="#151515"/><rect x="1269" y="149" width="1" height="4" fill="#151515"/><rect x="1242" y="243" width="37" height="96" fill="#494949"/><rect x="1242" y="338" width="37" height="1" fill="#2a2a2a"/><rect x="1242" y="243" width="37" height="1" fill="#585858"/><rect x="1251" y="246" width="1" height="4" fill="#151515"/><rect x="1253" y="246" width="1" height="4" fill="#151515"/><rect x="1255" y="246" width="1" height="4" fill="#151515"/><rect x="1257" y="246" width="1" height="4" fill="#151515"/><rect x="1259" y="246" width="1" height="4" fill="#151515"/><rect x="1261" y="246" width="1" height="4" fill="#151515"/><rect x="1263" y="246" width="1" height="4" fill="#151515"/><rect x="1265" y="246" width="1" height="4" fill="#151515"/><rect x="1267" y="246" width="1" height="4" fill="#151515"/><rect x="1269" y="246" width="1" height="4" fill="#151515"/><rect x="1242" y="340" width="37" height="96" fill="#494949"/><rect x="1242" y="435" width="37" height="1" fill="#2a2a2a"/><rect x="1242" y="340" width="37" height="1" fill="#585858"/><rect x="1251" y="343" width="1" height="4" fill="#151515"/><rect x="1253" y="343" width="1" height="4" fill="#151515"/><rect x="1255" y="343" width="1" height="4" fill="#151515"/><rect x="1257" y="343" width="1" height="4" fill="#151515"/><rect x="1259" y="343" width="1" height="4" fill="#151515"/><rect x="1261" y="343" width="1" height="4" fill="#151515"/><rect x="1263" y="343" width="1" height="4" fill="#151515"/><rect x="1265" y="343" width="1" height="4" fill="#151515"/><rect x="1267" y="343" width="1" height="4" fill="#151515"/><rect x="1269" y="343" width="1" height="4" fill="#151515"/><rect x="1242" y="437" width="37" height="68" fill="#494949"/><rect x="1242" y="504" width="37" height="1" fill="#2a2a2a"/><rect x="1242" y="437" width="37" height="1" fill="#585858"/><rect x="1251" y="440" width="1" height="4" fill="#151515"/><rect x="1253" y="440" width="1" height="4" fill="#151515"/><rect x="1255" y="440" width="1" height="4" fill="#151515"/><rect x="1257" y="440" width="1" height="4" fill="#151515"/><rect x="1259" y="440" width="1" height="4" fill="#151515"/><rect x="1261" y="440" width="1" height="4" fill="#151515"/><rect x="1263" y="440" width="1" height="4" fill="#151515"/><rect x="1265" y="440" width="1" height="4" fill="#151515"/><rect x="1267" y="440" width="1" height="4" fill="#151515"/><rect x="1269" y="440" width="1" height="4" fill="#151515"/><path d="M1258 93.8 Q1262 92.4 1266 93 Q1271.5 94.5 1271.3 100 Q1271 104.2 1266.5 105.5 Q1262.5 107.8 1257.5 107.5 Q1251.8 106.5 1251.8 101.5 Q1251.9 98.5 1254.2 97.3 L1258.8 97.8 Z" fill="#c4c4c4"/><circle cx="1255.9" cy="101.2" r="1.6" fill="#494949"/><circle cx="1260.4" cy="103.7" r="1.3" fill="#494949"/><circle cx="1265.1" cy="103.3" r="1.3" fill="#494949"/><circle cx="1268.3" cy="100" r="1.3" fill="#494949"/><circle cx="1266" cy="96.7" r="1.1" fill="#494949"/><path d="M1253.5 136.5 L1253.50 120.20 A16.3 16.3 0 0 1 1258.54 121.00 Z" fill="#c4c4c4"/><path d="M1253.5 136.5 L1258.54 121.00 A16.3 16.3 0 0 1 1263.08 123.31 Z" fill="#a8a8a8"/><path d="M1253.5 136.5 L1263.08 123.31 A16.3 16.3 0 0 1 1266.69 126.92 Z" fill="#8a8a8a"/><path d="M1253.5 136.5 L1266.69 126.92 A16.3 16.3 0 0 1 1269.00 131.46 Z" fill="#5a5a5a"/><path d="M1253.5 136.5 L1269.00 131.46 A16.3 16.3 0 0 1 1269.80 136.50 Z" fill="#2e2e2e"/><path d="M1253.5 120.2 L1253.5 136.5 L1269.8 136.5" fill="none" stroke="#d0d0d0" stroke-width="1"/><path d="M1253.5 120.2 A16.3 16.3 0 0 1 1269.8 136.5" fill="none" stroke="#d8d8d8" stroke-width="1.1"/><rect x="1253" y="163.5" width="16" height="11.2" fill="#d0d0d0"/><rect x="1254" y="164.5" width="4" height="4.2" fill="#2a2a2a"/><rect x="1259" y="164.5" width="4" height="4.2" fill="#4a4a4a"/><rect x="1264" y="164.5" width="4" height="4.2" fill="#7a7a7a"/><rect x="1254" y="169.5" width="4" height="4.2" fill="#6a6a6a"/><rect x="1259" y="169.5" width="4" height="4.2" fill="#5a5a5a"/><rect x="1264" y="169.5" width="4" height="4.2" fill="#3a3a3a"/><rect x="1257.5" y="198" width="9" height="9" fill="#bdbdbd"/><path d="M1261.5 198 L1262 189 M1259.5 198 L1256 193 M1264 198 L1267 193" stroke="#bdbdbd" stroke-width="1.3"/><path d="M1261 188 Q1262 186 1263 188 L1262.8 192 L1261.2 192 Z M1254 191 Q1255 189 1258 192 L1257 195 Z M1265 192 Q1268 190 1270 192 L1266.5 195 Z" fill="#bdbdbd"/><circle cx="1261" cy="221" r="3.9" fill="#bdbdbd"/><circle cx="1256.8" cy="227" r="3.9" fill="#bdbdbd"/><circle cx="1265.3" cy="227" r="3.9" fill="#bdbdbd"/><path d="M1260 226 L1262 226 L1262.5 231 L1266 232.7 L1256 232.7 L1259.5 231 Z" fill="#bdbdbd"/><rect x="1253" y="260" width="17" height="1.5" fill="#cfcfcf"/><rect x="1253" y="264.2" width="17" height="2.6" fill="#cfcfcf"/><rect x="1253" y="268.8" width="17" height="3.3" fill="#cfcfcf"/><defs><linearGradient id="dg" x1="0" y1="0" x2="1" y2="0"><stop offset="0" stop-color="#2a2a2a"/><stop offset="1" stop-color="#d0d0d0"/></linearGradient></defs><rect x="1253.5" y="288" width="16.5" height="12" fill="url(#dg)" stroke="#d0d0d0" stroke-width="1"/><circle cx="1258.8" cy="320" r="5.8" fill="#bdbdbd"/><circle cx="1264" cy="325.2" r="5.8" fill="#555" fill-opacity="0.6" stroke="#d8d8d8" stroke-width="1.2"/><circle cx="1257.3" cy="364.6" r="6.2" fill="#cfcfcf"/><circle cx="1265" cy="362.6" r="7.1" fill="#cfcfcf"/><rect x="1257.3" y="364" width="8" height="6.6" fill="#cfcfcf"/><path d="M1261.3 362.6 A4.3 4.3 0 1 0 1261.8 367.6" fill="#bcbcbc" stroke="#3a3a3a" stroke-width="1.1"/><path d="M1260.3 360.2 A5.4 5.4 0 1 1 1262.6 367.8 L1257.3 363.2" fill="#bcbcbc" stroke="#3a3a3a" stroke-width="1.1"/><circle cx="1261.3" cy="391.5" r="7.8" fill="none" stroke="#d8d8d8" stroke-width="1.3" stroke-dasharray="2.2 1.4"/><circle cx="1261.3" cy="391.5" r="5.5" fill="#bdbdbd"/><rect x="1257.6" y="412.2" width="12.4" height="12.2" fill="none" stroke="#cfcfcf" stroke-width="1.2"/><rect x="1253" y="418.5" width="5" height="5" fill="none" stroke="#cfcfcf" stroke-width="1.1"/><rect x="1255" y="421" width="5" height="6" fill="#8a8a8a" stroke="#cfcfcf" stroke-width="1.1"/><rect x="1246" y="448" width="29" height="23.5" rx="3" fill="#333333"/><path d="M1261.3 460.2 L1270 464.2 L1261.3 469 L1252.7 464.2 Z" fill="#c8c8c8"/><path d="M1261.3 451.5 L1270 456.5 L1261.3 461.2 L1252.7 456.5 Z" fill="#d8d8d8" stroke="#333" stroke-width="0.8"/><rect x="1252.5" y="479.2" width="8.5" height="12" fill="none" stroke="#d0d0d0" stroke-width="1.2"/><rect x="1256.5" y="485.5" width="13.5" height="11.3" fill="#4d4d4d" stroke="#d0d0d0" stroke-width="1.2"/></svg>
<div style="left:951px;top:434px;width:290px;height:265px;background:#494949;border:1px solid #222;box-sizing:border-box;"></div>
<div style="left:952px;top:435px;width:288px;height:3px;background:#2c2c2c;"></div>
<div style="left:952px;top:438px;width:288px;height:17px;background:#333333;"></div>
<div style="left:993px;top:438px;width:92px;height:17px;background:#3b3b3b;"></div>
<div style="left:1085px;top:438px;width:1px;height:17px;background:#2c2c2c;"></div>
<div style="left:952px;top:438px;width:41px;height:17px;background:#494949;"></div>
<div style="left:993px;top:438px;width:1px;height:17px;background:#2c2c2c;"></div>
<div class="t" style="left:959px;top:441.81px;font-size:10.5px;line-height:10.5px;color:#e8e8e8;font-weight:bold;letter-spacing:-1.103px;">Capas</div>
<div class="t" style="left:1000.5px;top:441.81px;font-size:10.5px;line-height:10.5px;color:#9a9a9a;font-weight:bold;letter-spacing:-0.513px;">Mesas de trabajo</div>
<svg style="left:1195px;top:438px;" width="45" height="17" viewBox="0 0 45 17"><path d="M5 5 L9.5 8.5 L5 12 Z M10 5 L14.5 8.5 L10 12 Z" fill="#bdbdbd"/><rect x="20" y="3" width="1" height="11" fill="#6a6a6a"/><rect x="22" y="3" width="1" height="11" fill="#6a6a6a"/><rect x="27" y="6" width="5" height="1" fill="#111"/><path d="M27 7 L32 7 L29.5 10 Z" fill="#c8c8c8"/><rect x="33" y="4" width="8" height="1" fill="#111"/><rect x="33" y="5" width="8" height="1" fill="#d0d0d0"/><rect x="33" y="6" width="8" height="1" fill="#111"/><rect x="33" y="7" width="8" height="1" fill="#d0d0d0"/><rect x="33" y="8" width="8" height="1" fill="#111"/><rect x="33" y="9" width="8" height="1" fill="#d0d0d0"/><rect x="33" y="10" width="8" height="1" fill="#111"/><rect x="33" y="11" width="8" height="1" fill="#d0d0d0"/></svg>
<div style="left:957px;top:461px;width:278px;height:210px;background:#484848;border:1px solid #2e2e2e;box-sizing:border-box;"></div>
<div style="left:958px;top:462px;width:276px;height:20px;background:#4a4a4a;"></div>
<div style="left:958px;top:482px;width:276px;height:1px;background:#333333;"></div>
<div style="left:958px;top:483px;width:276px;height:20px;background:#565656;"></div>
<div style="left:958px;top:503px;width:276px;height:1px;background:#333333;"></div>
<div style="left:978px;top:462px;width:1px;height:20px;background:#353535;"></div>
<div style="left:1199px;top:462px;width:1px;height:20px;background:#353535;"></div>
<div style="left:978px;top:483px;width:1px;height:20px;background:#353535;"></div>
<div style="left:1199px;top:483px;width:1px;height:20px;background:#353535;"></div>
<div style="left:999px;top:462px;width:6px;height:20px;background:#2a2a2a;"></div>
<div style="left:999px;top:483px;width:6px;height:20px;background:#2a2a2a;"></div>
<div style="left:1000px;top:462px;width:4px;height:19px;background:#4f80ff;"></div>
<div style="left:1000px;top:483px;width:4px;height:19px;background:#4f80ff;"></div>
<svg style="left:960.5px;top:466px;" width="14" height="12" viewBox="0 0 14 12"><path d="M0.4 4.8 Q6.4 -3.6 12.4 4.8 Q6.4 13.2 0.4 4.8 Z" fill="#c0c0c0"/><path d="M1.9 4.8 Q6.4 -1.4 10.9 4.8 Q6.4 11 1.9 4.8 Z" fill="#4a4a4a"/><circle cx="6.4" cy="4.9" r="3.1" fill="#222"/><circle cx="7.5" cy="3.7" r="1" fill="#d8d8d8"/></svg>
<svg style="left:960.5px;top:487px;" width="14" height="12" viewBox="0 0 14 12"><path d="M0.4 4.8 Q6.4 -3.6 12.4 4.8 Q6.4 13.2 0.4 4.8 Z" fill="#c0c0c0"/><path d="M1.9 4.8 Q6.4 -1.4 10.9 4.8 Q6.4 11 1.9 4.8 Z" fill="#4a4a4a"/><circle cx="6.4" cy="4.9" r="3.1" fill="#222"/><circle cx="7.5" cy="3.7" r="1" fill="#d8d8d8"/></svg>
<svg style="left:1008px;top:468px;" width="12" height="10" viewBox="0 0 12 10"><path d="M2 2 L10 2 L6 8 Z" fill="#d0d0d0"/></svg>
<svg style="left:1029px;top:487px;" width="10" height="12" viewBox="0 0 10 12"><path d="M2 2 L8 6 L2 10 Z" fill="#d0d0d0"/></svg>
<svg style="left:1027px;top:463px;" width="18" height="18" viewBox="0 0 18 18"><rect x="0.5" y="0.5" width="17" height="17" fill="#fff" stroke="#000" stroke-width="1.2"/><g transform="translate(1.9,2.5) scale(0.0605,0.068) translate(-409,-166)"><polygon points="467.2,176.1 562.5,182.5 562.5,257 530.2,314.5 460.4,303.5 408.9,229.6" fill="#dd1a2f"/><rect x="470.6" y="245.4" width="154.8" height="107" fill="#dd1a2f"/><ellipse cx="582.3" cy="221.5" rx="64.5" ry="56.1" fill="#dd1a2f" stroke="#f27a88" stroke-width="12"/><path d="M470.6 352 L470.6 245.4 L525 245.4" fill="none" stroke="#f27a88" stroke-width="12"/></g></svg>
<svg style="left:1047px;top:484px;" width="18" height="18" viewBox="0 0 18 18"><rect x="0.5" y="0.5" width="17" height="17" fill="#fff" stroke="#000" stroke-width="1.2"/><g transform="translate(1.9,2.5) scale(0.0605,0.068) translate(-409,-166)"><polygon points="467.2,176.1 562.5,182.5 562.5,257 530.2,314.5 460.4,303.5 408.9,229.6" fill="#dd1a2f"/><rect x="470.6" y="245.4" width="154.8" height="107" fill="#dd1a2f"/><ellipse cx="582.3" cy="221.5" rx="64.5" ry="56.1" fill="#dd1a2f" stroke="#f27a88" stroke-width="12"/><path d="M470.6 352 L470.6 245.4 L525 245.4" fill="none" stroke="#f27a88" stroke-width="12"/></g></svg>
<div class="t" style="left:1050px;top:468.54px;font-size:10px;line-height:10px;color:#e4e4e4;font-weight:bold;letter-spacing:-0.466px;">Capa 1</div>
<div class="t" style="left:1070.7px;top:489.44px;font-size:10px;line-height:10px;color:#e4e4e4;font-weight:bold;letter-spacing:-0.170px;">&lt;Grupo&gt;</div>
<svg style="left:1200px;top:462px;" width="34" height="41" viewBox="0 0 34 41"><circle cx="9.4" cy="10" r="4" fill="none" stroke="#bdbdbd" stroke-width="1"/><rect x="20.5" y="6.5" width="7" height="7" fill="#4f80ff" stroke="#101010" stroke-width="1"/><path d="M29 0.5 L34 0.5 L34 5.5 Z" fill="#d8d8d8"/><circle cx="9.4" cy="31" r="6" fill="none" stroke="#bdbdbd" stroke-width="1"/><circle cx="9.4" cy="31" r="3.8" fill="none" stroke="#bdbdbd" stroke-width="1"/><rect x="20.5" y="27.5" width="7" height="7" fill="#4f80ff" stroke="#101010" stroke-width="1"/></svg>
<div class="t" style="left:957.5px;top:677.26px;font-size:9.5px;line-height:9.5px;color:#e4e4e4;font-weight:bold;letter-spacing:-0.180px;">1 capa</div>
<svg style="left:1095px;top:672px;" width="145" height="18" viewBox="0 0 145 18"><circle cx="9" cy="6.2" r="4.6" fill="none" stroke="#cfcfcf" stroke-width="1.3"/><path d="M5.7 9.5 L2 13.5" stroke="#cfcfcf" stroke-width="1.5"/><rect x="28.5" y="3.5" width="6" height="6" fill="none" stroke="#6e6e6e" stroke-width="1"/><rect x="31.5" y="6.5" width="6" height="6.5" fill="#5e5e5e" stroke="#6e6e6e" stroke-width="1"/><path d="M53 3.5 L53 7.5 L57 7.5 M55.5 5.5 L57.5 7.5 L55.5 9.5" fill="none" stroke="#6e6e6e" stroke-width="1"/><path d="M59 4 L67 4 L67 12 L61 12 L61 9.5 L59 7.5 Z" fill="#6e6e6e"/><path d="M81 3.5 L91 3.5 L91 14 L84.5 14 L84.5 10 L81 10 Z" fill="#cfcfcf"/><path d="M81.5 10.5 L84 10.5 L84 13.5 Z" fill="#cfcfcf"/><rect x="107" y="5" width="10" height="9" fill="none" stroke="#6a6a6a" stroke-width="1"/><rect x="106" y="3.5" width="12" height="1.2" fill="#6a6a6a"/><rect x="110" y="2" width="4" height="1.5" fill="#6a6a6a"/><path d="M109.5 6.5 V12.5 M112 6.5 V12.5 M114.5 6.5 V12.5" stroke="#6a6a6a" stroke-width="0.9"/><rect x="142" y="6" width="1" height="1" fill="#111"/><rect x="140" y="8" width="1" height="1" fill="#111"/><rect x="142" y="8" width="1" height="1" fill="#111"/><rect x="138" y="10" width="1" height="1" fill="#111"/><rect x="140" y="10" width="1" height="1" fill="#111"/><rect x="142" y="10" width="1" height="1" fill="#111"/><rect x="136" y="12" width="1" height="1" fill="#111"/><rect x="138" y="12" width="1" height="1" fill="#111"/><rect x="140" y="12" width="1" height="1" fill="#111"/><rect x="142" y="12" width="1" height="1" fill="#111"/><rect x="134" y="14" width="1" height="1" fill="#111"/><rect x="136" y="14" width="1" height="1" fill="#111"/><rect x="138" y="14" width="1" height="1" fill="#111"/><rect x="140" y="14" width="1" height="1" fill="#111"/><rect x="142" y="14" width="1" height="1" fill="#111"/></svg>
<div style="left:952px;top:690px;width:288px;height:1px;background:#303030;"></div>
<div style="left:952px;top:691px;width:288px;height:7px;background:#484848;"></div>
<svg style="left:1086px;top:692px;" width="21" height="5" viewBox="0 0 21 5"><rect x="0" y="0" width="1" height="4" fill="#151515"/><rect x="2" y="0" width="1" height="4" fill="#151515"/><rect x="4" y="0" width="1" height="4" fill="#151515"/><rect x="6" y="0" width="1" height="4" fill="#151515"/><rect x="8" y="0" width="1" height="4" fill="#151515"/><rect x="10" y="0" width="1" height="4" fill="#151515"/><rect x="12" y="0" width="1" height="4" fill="#151515"/><rect x="14" y="0" width="1" height="4" fill="#151515"/><rect x="16" y="0" width="1" height="4" fill="#151515"/><rect x="18" y="0" width="1" height="4" fill="#151515"/></svg>
<svg style="left:0px;top:0px;" width="950" height="433" viewBox="0 0 950 433"><polygon points="467.2,176.1 562.5,182.5 562.5,257 530.2,314.5 460.4,303.5 408.9,229.6" fill="#dc1a31"/><polygon points="467.2,176.1 562.5,182.5 562.5,257 530.2,314.5 460.4,303.5 408.9,229.6" fill="none" stroke="#120818" stroke-width="1.5" transform="translate(-0.4,0.4)"/><rect x="470.5" y="245.5" width="155.5" height="107.5" fill="#dc1a31"/><path d="M470.5 352.5 L470.5 246.5 L625.5 246.5 L625.5 352.5" fill="none" stroke="#0c0612" stroke-width="1"/><ellipse cx="582.3" cy="221.5" rx="64.6" ry="56.2" fill="#dc1a31"/><ellipse cx="582.1" cy="221.9" rx="64.6" ry="56.2" fill="none" stroke="#120818" stroke-width="1.3"/><g opacity="0.6"><polygon points="467.2,176.1 562.5,182.5 562.5,257 530.2,314.5 460.4,303.5 408.9,229.6" fill="none" stroke="#6f9cff" stroke-width="1"/><path d="M471.5 352.5 L471.5 245.5 L626.5 245.5 L626.5 352.5" fill="none" stroke="#6f9cff" stroke-width="1"/><ellipse cx="582.3" cy="221.5" rx="64.5" ry="56.1" fill="none" stroke="#6f9cff" stroke-width="1"/></g><rect x="471" y="352" width="155" height="2" fill="#4f80ff"/><rect x="409.5" y="166.5" width="238" height="187" fill="none" stroke="#4f76a6" stroke-width="1"/><rect x="465.0" y="174.0" width="5" height="5" fill="#4f80ff"/><rect x="560.0" y="180.0" width="5" height="5" fill="#4f80ff"/><rect x="560.0" y="255.0" width="5" height="5" fill="#4f80ff"/><rect x="528.0" y="312.0" width="5" height="5" fill="#4f80ff"/><rect x="458.0" y="301.0" width="5" height="5" fill="#4f80ff"/><rect x="406.5" y="227.0" width="5" height="5" fill="#4f80ff"/><rect x="468.0" y="243.0" width="5" height="5" fill="#4f80ff"/><rect x="623.0" y="243.0" width="5" height="5" fill="#4f80ff"/><rect x="623.0" y="350.0" width="5" height="5" fill="#4f80ff"/><rect x="468.0" y="350.0" width="5" height="5" fill="#4f80ff"/><rect x="580.0" y="163.0" width="5" height="5" fill="#4f80ff"/><rect x="644.0" y="219.0" width="5" height="5" fill="#4f80ff"/><rect x="580.0" y="275.0" width="5" height="5" fill="#4f80ff"/><rect x="515.0" y="219.0" width="5" height="5" fill="#4f80ff"/><rect x="580.25" y="219.25" width="4.5" height="4.5" fill="#4f80ff"/><rect x="546.25" y="296.25" width="4.5" height="4.5" fill="#4f80ff"/><rect x="406.5" y="163.5" width="6" height="6" fill="#fff" stroke="#4f76a6" stroke-width="1"/><rect x="525.5" y="163.5" width="6" height="6" fill="#fff" stroke="#4f76a6" stroke-width="1"/><rect x="644.5" y="163.5" width="6" height="6" fill="#fff" stroke="#4f76a6" stroke-width="1"/><rect x="406.5" y="256.5" width="6" height="6" fill="#fff" stroke="#4f76a6" stroke-width="1"/><rect x="644.5" y="256.5" width="6" height="6" fill="#fff" stroke="#4f76a6" stroke-width="1"/><rect x="406.5" y="350.5" width="6" height="6" fill="#fff" stroke="#4f76a6" stroke-width="1"/><rect x="525.5" y="350.5" width="6" height="6" fill="#fff" stroke="#4f76a6" stroke-width="1"/><rect x="644.5" y="350.5" width="6" height="6" fill="#fff" stroke="#4f76a6" stroke-width="1"/></svg>
<svg style="left:876px;top:530px;" width="20" height="24" viewBox="0 0 20 24"><path d="M5.3 4 L5.3 16.7 L8.1 14 L11 19.6 L12.6 18.8 L9.7 12.9 L13.9 12.6 Z" fill="#000"/></svg>
</body></html>
